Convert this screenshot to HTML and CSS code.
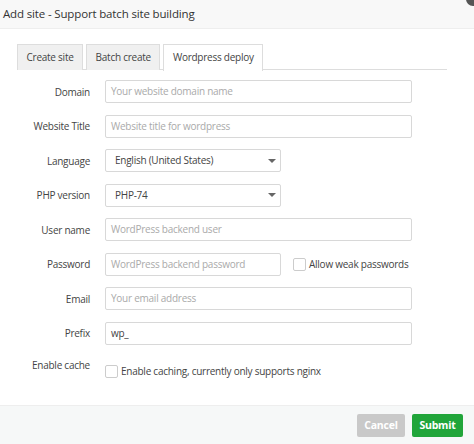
FILE: index.html
```html
<!DOCTYPE html>
<html lang="en">
<head>
<meta charset="utf-8">
<title>Add site</title>
<link rel="stylesheet" href="styles.css">
</head>
<body>
<div class="dialog">
  <div class="header">
    <span class="title">Add site - Support batch site building</span>
    <span class="close"></span>
  </div>
  <div class="content">
    <div class="tabs">
      <div class="tab">Create site</div>
      <div class="tab">Batch create</div>
      <div class="tab active">Wordpress deploy</div>
    </div>
    <div class="form">
      <div class="row">
        <div class="label">Domain</div>
        <div class="input long placeholder">Your website domain name</div>
      </div>
      <div class="row">
        <div class="label">Website Title</div>
        <div class="input long placeholder">Website title for wordpress</div>
      </div>
      <div class="row">
        <div class="label">Language</div>
        <div class="select short"><span>English (United States)</span><i class="arrow"></i></div>
      </div>
      <div class="row">
        <div class="label">PHP version</div>
        <div class="select short"><span>PHP-74</span><i class="arrow"></i></div>
      </div>
      <div class="row">
        <div class="label">User name</div>
        <div class="input long placeholder">WordPress backend user</div>
      </div>
      <div class="row">
        <div class="label">Password</div>
        <div class="input short placeholder">WordPress backend password</div>
        <div class="check weak"><span class="box"></span><span>Allow weak passwords</span></div>
      </div>
      <div class="row">
        <div class="label">Email</div>
        <div class="input long placeholder">Your email address</div>
      </div>
      <div class="row">
        <div class="label">Prefix</div>
        <div class="input long">wp_</div>
      </div>
      <div class="row cache">
        <div class="label">Enable cache</div>
        <div class="check"><span class="box"></span><span>Enable caching, currently only supports nginx</span></div>
      </div>
    </div>
  </div>
  <div class="footer">
    <button class="btn cancel">Cancel</button>
    <button class="btn submit">Submit</button>
  </div>
</div>
</body>
</html>
```
FILE: styles.css
```css
* { box-sizing: border-box; }
html, body { margin: 0; padding: 0; background: #fff; }
body {
  font-family: "Open Sans", "Noto Sans", sans-serif;
  font-size: 10px;
  letter-spacing: -0.25px;
  color: #444;
  width: 474px;
  height: 444px;
  overflow: hidden;
}
.dialog {
  position: relative;
  height: 444px;
  display: flex;
  flex-direction: column;
}
.header {
  height: 29px;
  background: #f8f8f8;
  border-bottom: 1px solid #eee;
  padding-left: 3px;
  line-height: 28px;
}
.title {
  font-size: 11.5px;
  letter-spacing: -0.15px;
  color: #333;
}
.close {
  position: absolute;
  right: -6px;
  top: -8px;
  width: 14px;
  height: 14px;
  border-radius: 50%;
  background: #555;
}
.content {
  flex: 1;
  padding: 15px 27px 0 17px;
}
.tabs {
  display: flex;
  gap: 3px;
  border-bottom: 1px solid #ddd;
  height: 26px;
}
.tab {
  height: 26px;
  padding: 0 8.5px;
  line-height: 24px;
  background: #f0f0f0;
  border: 1px solid #ddd;
  border-bottom: none;
  color: #444;
}
.tab.active {
  background: #fff;
  margin-bottom: -1px;
  height: 27px;
}
.form {
  padding-top: 10px;
  display: flex;
  flex-direction: column;
  gap: 11.5px;
  margin-left: -17px;
}
.row {
  display: flex;
  align-items: center;
  height: 23px;
}
.label {
  width: 90px;
  text-align: right;
  margin-right: 15px;
  color: #444;
  flex: none;
}
.input, .select {
  height: 23px;
  border: 1px solid #d8d8d8;
  border-radius: 2px;
  line-height: 21px;
  padding-left: 5px;
  color: #444;
  white-space: nowrap;
}
.long { width: 307px; }
.short { width: 176px; }
.placeholder { color: #aaa; }
.select {
  display: flex;
  justify-content: space-between;
  align-items: center;
  padding: 0 4px 0 9px;
  color: #444;
}
.arrow {
  width: 0;
  height: 0;
  border-left: 4px solid transparent;
  border-right: 4px solid transparent;
  border-top: 4px solid #666;
}
.check {
  display: flex;
  align-items: center;
  gap: 3px;
  color: #444;
  white-space: nowrap;
}
.box {
  width: 13px;
  height: 13px;
  border: 1px solid #ccc;
  border-radius: 2px;
  background: #fff;
  flex: none;
}
.weak { margin-left: 12px; }
.row.cache {
  align-items: flex-start;
  height: 20px;
  margin-top: 5px;
}
.row.cache .label { line-height: 12px; margin-top: -2px; }
.row.cache .check { margin-top: 3px; }
.footer {
  height: 39px;
  background: #f6f8f8;
  border-top: 1px solid #eee;
  display: flex;
  justify-content: flex-end;
  align-items: center;
  gap: 7px;
  padding-right: 11px;
}
.btn {
  height: 23px;
  border: none;
  border-radius: 2px;
  color: #fff;
  font-family: inherit;
  font-size: 10.5px;
  font-weight: 700;
  letter-spacing: -0.2px;
  padding: 0;
}
.cancel { width: 48px; background: #c9c9c9; }
.submit { width: 51px; background: #20a53a; }
```
